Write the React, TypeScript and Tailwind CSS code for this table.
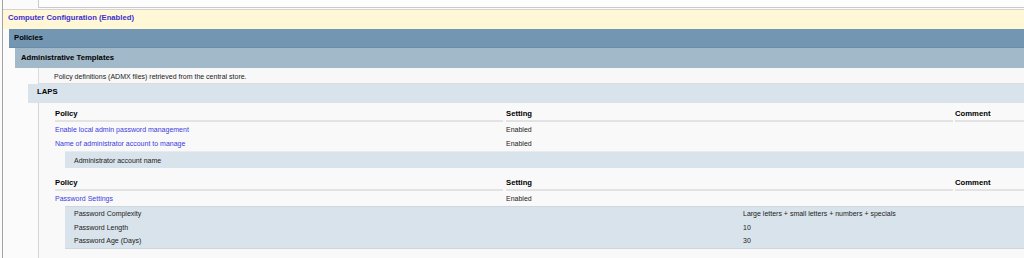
import React from "react";

const link = "text-[#3b3be0]";

function Header() {
  return (
    <div className="grid grid-cols-[451px_449px_1fr] h-[15px] items-center text-[7.7px] font-bold text-black">
      <div className="h-full flex items-center border-b-2 border-[#e3e3e3] mr-[3px]">Policy</div>
      <div className="h-full flex items-center border-b-2 border-[#e3e3e3] mr-[2px]">Setting</div>
      <div className="h-full flex items-center border-b-2 border-[#e3e3e3]">Comment</div>
    </div>
  );
}

function Row({ name, setting }: { name: string; setting: string }) {
  return (
    <div className="grid grid-cols-[451px_449px_1fr] h-[14px] items-center text-[7px]">
      <div className={link}>{name}</div>
      <div className="text-[#222]">{setting}</div>
      <div />
    </div>
  );
}

export default function App() {
  return (
    <div className="w-[1024px] h-[258px] overflow-hidden bg-[#fbfbfb] font-['Liberation_Sans',Arial,sans-serif] leading-none">
      <div className="ml-[2px] h-[258px] border-l border-[#a3a3a3]">
        <div className="ml-[35px] h-[8px] bg-[#fdfdfd] border-l border-b border-[#cacaca]" />
        <div className="mt-[1px] h-[20px] bg-[#fff7d6] border-t border-[#d2d2d2] flex items-center pl-[5px] pb-[3px] text-[7.7px] font-bold text-[#3a30d0]">
          Computer Configuration (Enabled)
        </div>
        <div className="ml-[6px] h-[19px] bg-[#7397b2] border-b border-[#6a8ea9] flex items-center pl-[5px] text-[7.7px] font-bold text-black">
          Policies
        </div>
        <div className="ml-[12px] h-[20px] bg-[#a1b9c9] flex items-center pl-[6px] pb-[1px] text-[7.7px] font-bold text-black">
          Administrative Templates
        </div>
        <div className="ml-[35px] h-[16px] bg-[#f8f8f8] border-l border-b border-[#dcdcdc] flex items-center pl-[15px] pt-[1px] text-[7px] text-[#222]">
          Policy definitions (ADMX files) retrieved from the central store.
        </div>
        <div className="ml-[25px] h-[19px] bg-[#d9e3eb] flex items-center pl-[9px] pb-[3px] text-[7.7px] font-bold text-black">
          LAPS
        </div>
        <div className="ml-[35px] h-[200px] bg-[#f9f9f9] border-l border-[#d4d4d4] pl-[16px] pt-[4px]">
          <Header />
          <Row name="Enable local admin password management" setting="Enabled" />
          <Row name="Name of administrator account to manage" setting="Enabled" />
          <div className="ml-[10px] mt-[1px] h-[17px] bg-[#d9e3eb] border-t border-[#e6ebef] flex items-center pl-[9px] text-[7px] text-[#222]">
            Administrator account name
          </div>
          <div className="mt-[8px]">
            <Header />
          </div>
          <Row name="Password Settings" setting="Enabled" />
          <div className="ml-[10px] mt-[1px] bg-[#d9e3eb] border-t border-b border-[#cfd6dc] text-[7px] text-[#222]">
            {[
              ["Password Complexity", "Large letters + small letters + numbers + specials"],
              ["Password Length", "10"],
              ["Password Age (Days)", "30"],
            ].map(([k, v]) => (
              <div key={k} className="grid grid-cols-[669px_1fr] h-[13.5px] items-center pl-[9px]">
                <div>{k}</div>
                <div>{v}</div>
              </div>
            ))}
          </div>
        </div>
      </div>
    </div>
  );
}
